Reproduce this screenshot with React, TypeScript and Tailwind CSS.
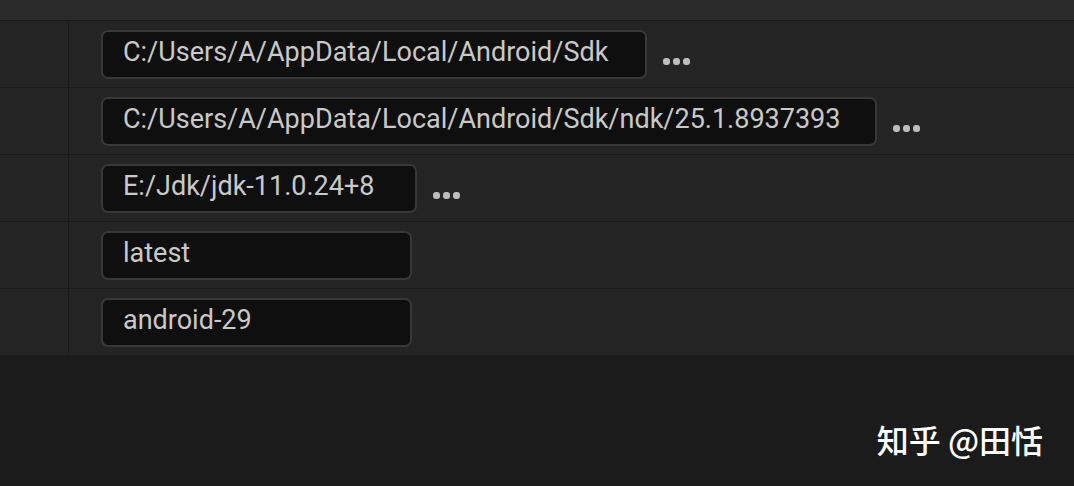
import React from "react";

const rows: { text: string; w: number; dots: boolean }[] = [
  { text: "C:/Users/A/AppData/Local/Android/Sdk", w: 546, dots: true },
  { text: "C:/Users/A/AppData/Local/Android/Sdk/ndk/25.1.8937393", w: 776, dots: true },
  { text: "E:/Jdk/jdk-11.0.24+8", w: 316, dots: true },
  { text: "latest", w: 311, dots: false },
  { text: "android-29", w: 311, dots: false },
];

function Dots() {
  return (
    <div className="ml-[16px] mt-[14px] flex gap-[3px]">
      <span className="h-[7px] w-[7px] rounded-[3px] bg-[#bdbdbd]" />
      <span className="h-[7px] w-[7px] rounded-[3px] bg-[#bdbdbd]" />
      <span className="h-[7px] w-[7px] rounded-[3px] bg-[#bdbdbd]" />
    </div>
  );
}

export default function App() {
  return (
    <div
      className="flex h-[486px] w-[1074px] flex-col bg-[#1b1b1b]"
      style={{ fontFamily: "Roboto, 'Noto Sans CJK SC', sans-serif" }}
    >
      <div className="h-[20px] bg-[#2a2a2a]" />
      {rows.map((r, i) => (
        <div key={i} className="flex h-[67px] border-t border-[#1a1a1a] bg-[#242424]">
          <div className="w-[69px] border-r border-[#1a1a1a]" />
          <div className="flex items-center pl-[32px]">
            <div
              className="flex h-[49px] items-center rounded-[7px] border-2 border-[#383838] bg-[#0f0f0f] pl-[20px] pb-[4px] text-[27px] leading-none text-[#c9c9c9]"
              style={{ width: r.w }}
            >
              {r.text}
            </div>
            {r.dots && <Dots />}
          </div>
        </div>
      ))}
      <div className="flex flex-1 items-end justify-end pr-[31px] pb-[31px]">
        <span
          className="text-[32px] font-medium leading-none text-white"
          style={{ fontFamily: "'Noto Sans CJK SC', 'Noto Sans', sans-serif" }}
        >
          知乎 @田恬
        </span>
      </div>
    </div>
  );
}
